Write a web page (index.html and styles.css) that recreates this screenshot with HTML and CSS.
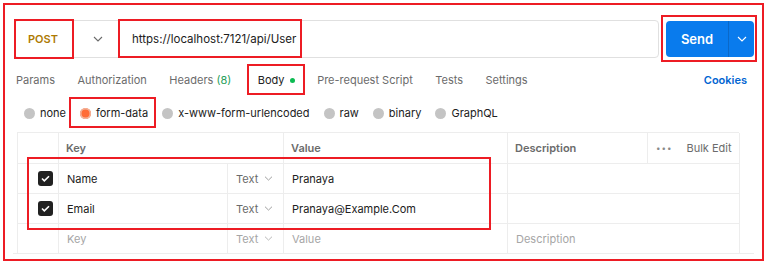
FILE: index.html
```html
<!DOCTYPE html>
<html>

<head>
    <meta charset="UTF-8">
    <meta name="viewport" content="width=device-width, initial-scale=1.0">
    <link rel="stylesheet" href="styles.css">
    <title>POST User</title>
</head>

<body>

    <div class="frame">

        <div class="url-row">
            <div class="url-bar">
                <div class="method">
                    <span class="method-name">POST</span>
                    <svg class="chev" width="10" height="6" viewBox="0 0 10 6"><path d="M1 1l4 4 4-4" fill="none" stroke="#6b6b6b" stroke-width="1.1"/></svg>
                </div>
                <div class="url">https://localhost:7121/api/User</div>
            </div>
            <div class="send">
                <span class="send-label">Send</span>
                <span class="send-more">
                    <svg width="10" height="6" viewBox="0 0 10 6"><path d="M1 1l4 4 4-4" fill="none" stroke="#fff" stroke-width="1.1"/></svg>
                </span>
            </div>
        </div>

        <div class="tabs">
            <a href="#params">Params</a>
            <a href="#auth">Authorization</a>
            <a href="#headers">Headers <span class="count">(8)</span></a>
            <a href="#body" class="active">Body <span class="dot"></span></a>
            <a href="#pre">Pre-request Script</a>
            <a href="#tests">Tests</a>
            <a href="#settings">Settings</a>
            <a href="#cookies" class="cookies">Cookies</a>
        </div>

        <div class="radios">
            <label><span class="radio"></span>none</label>
            <label><span class="radio checked"></span>form-data</label>
            <label><span class="radio"></span>x-www-form-urlencoded</label>
            <label><span class="radio"></span>raw</label>
            <label><span class="radio"></span>binary</label>
            <label><span class="radio"></span>GraphQL</label>
        </div>

        <div class="table-wrap">
            <div class="grid">
                <div class="cell head"></div>
                <div class="cell head span2">Key</div>
                <div class="cell head">Value</div>
                <div class="cell head">Description</div>
                <div class="cell head bulk"><span class="dots">&bull;&bull;&bull;</span>Bulk Edit</div>

                <div class="cell"><span class="check"><svg width="9" height="7" viewBox="0 0 9 7"><path d="M1 3.5l2.3 2.3L8 1.2" fill="none" stroke="#fff" stroke-width="1.6"/></svg></span></div>
                <div class="cell">Name</div>
                <div class="cell type">Text <svg width="9" height="5" viewBox="0 0 9 5"><path d="M1 .7l3.5 3.4L8 .7" fill="none" stroke="#a0a0a0" stroke-width="1"/></svg></div>
                <div class="cell">Pranaya</div>
                <div class="cell span2"></div>

                <div class="cell"><span class="check"><svg width="9" height="7" viewBox="0 0 9 7"><path d="M1 3.5l2.3 2.3L8 1.2" fill="none" stroke="#fff" stroke-width="1.6"/></svg></span></div>
                <div class="cell">Email</div>
                <div class="cell type">Text <svg width="9" height="5" viewBox="0 0 9 5"><path d="M1 .7l3.5 3.4L8 .7" fill="none" stroke="#a0a0a0" stroke-width="1"/></svg></div>
                <div class="cell">Pranaya@Example.Com</div>
                <div class="cell span2"></div>

                <div class="cell"></div>
                <div class="cell muted">Key</div>
                <div class="cell type muted">Text <svg width="9" height="5" viewBox="0 0 9 5"><path d="M1 .7l3.5 3.4L8 .7" fill="none" stroke="#b8b8b8" stroke-width="1"/></svg></div>
                <div class="cell muted">Value</div>
                <div class="cell span2 muted">Description</div>
            </div>
        </div>

        <!-- red annotation boxes drawn over the screenshot -->
        <div class="mark mark-method"></div>
        <div class="mark mark-url"></div>
        <div class="mark mark-send"></div>
        <div class="mark mark-body"></div>
        <div class="mark mark-form"></div>
        <div class="mark mark-rows"></div>
    </div>

</body>

</html>
```

FILE: styles.css
```css
body {
    margin: 0;
    padding: 0;
    background: #fff;
    font-family: Inter, "Noto Sans", sans-serif;
    font-size: 11px;
    color: #212121;
}

.frame {
    position: relative;
    margin: 3px 4px 0 3px;
    height: 254px;
    border: 2px solid #ed1c24;
}

/* url bar */

.url-row {
    display: flex;
    align-items: center;
    margin-top: 15px;
    padding-left: 9px;
}

.url-bar {
    display: flex;
    align-items: center;
    width: 643px;
    height: 36px;
    border: 1px solid #e0e0e0;
    border-radius: 4px;
}

.method {
    display: flex;
    align-items: center;
    justify-content: space-between;
    width: 104px;
    height: 100%;
    padding: 0 16px 0 13px;
    box-sizing: border-box;
}

.method-name {
    color: #ad7a03;
    font-weight: 600;
}

.url {
    padding-left: 13px;
    font-size: 11.5px;
}

.send {
    display: flex;
    margin-left: 7px;
    width: 88px;
    height: 36px;
    background-color: #097bed;
    border-radius: 4px;
    color: #fff;
}

.send-label {
    display: flex;
    align-items: center;
    justify-content: center;
    width: 62px;
    font-size: 13px;
    font-weight: 600;
}

.send-more {
    display: flex;
    align-items: center;
    justify-content: center;
    flex: 1;
    border-left: 1px solid #0a68c8;
}

/* tabs */

.tabs {
    display: flex;
    align-items: center;
    height: 28px;
    margin-top: 8px;
    padding: 0 15px 0 11px;
}

.tabs a {
    color: #6b6b6b;
    text-decoration: none;
    margin-right: 22.5px;
    white-space: nowrap;
}

.tabs a.active {
    margin-left: 4px;
    color: #212121;
}

.tabs .count {
    color: #28a05a;
}

.tabs .dot {
    display: inline-block;
    width: 5px;
    height: 5px;
    margin-left: 2px;
    border-radius: 50%;
    background-color: #0cbb52;
    vertical-align: 1px;
}

.tabs a.cookies {
    margin: 0 0 0 auto;
    color: #0265d2;
    font-weight: 600;
}

/* body type radios */

.radios {
    display: flex;
    align-items: center;
    height: 26px;
    margin-top: 6px;
    padding-left: 19px;
    color: #212121;
}

.radios label {
    display: flex;
    align-items: center;
    margin-right: 14px;
}

.radio {
    width: 11px;
    height: 11px;
    margin-right: 5px;
    border-radius: 50%;
    background-color: #c4c4c4;
}

.radio.checked {
    background-color: #ff6c37;
    box-shadow: inset 0 0 0 1.5px #f2b49c;
}

/* key value table */

.table-wrap {
    width: 737px;
    margin: 6px 0 0 8px;
    padding-left: 4px;
    border-bottom: 1px solid #ededed;
}

.grid {
    display: grid;
    grid-template-columns: 41px 169px 56px 224px 140px 92px;
    width: 722px;
    border-top: 1px solid #ededed;
    border-left: 1px solid #ededed;
    box-sizing: border-box;
}

.cell {
    display: flex;
    align-items: center;
    height: 29px;
    padding-left: 8px;
    border-right: 1px solid #ededed;
    border-bottom: 1px solid #ededed;
    white-space: nowrap;
}

.grid .cell:nth-last-child(-n+5) {
    border-bottom: none;
}

.cell.head {
    height: 30px;
    color: #6b6b6b;
    font-weight: 600;
}

.cell.head.span2,
.cell.head:nth-child(3),
.cell.head:nth-child(4) {
    padding-left: 7px;
}

.cell.span2 {
    grid-column: span 2;
}

.cell.bulk {
    font-weight: 400;
}

.dots {
    margin-right: 14px;
    font-size: 8px;
    letter-spacing: 1px;
    color: #8a8a8a;
}

.cell.type {
    color: #6b6b6b;
}

.cell.type svg {
    margin-left: 6px;
}

.cell.muted {
    color: #a6a6a6;
}

.check {
    display: flex;
    align-items: center;
    justify-content: center;
    width: 15px;
    height: 15px;
    margin-left: 12px;
    border-radius: 3px;
    background-color: #212121;
}

/* annotations */

.mark {
    position: absolute;
    border: 2px solid #ed1c24;
    box-sizing: border-box;
}

.mark-method { left: 9px;   top: 14px; width: 60px; height: 40px; }
.mark-url    { left: 113px; top: 14px; width: 184px; height: 39px; }
.mark-send   { left: 656px; top: 10px; width: 96px; height: 47px; }
.mark-body   { left: 242px; top: 59px; width: 58px; height: 31px; }
.mark-form   { left: 64px;  top: 92px; width: 87px; height: 31px; }
.mark-rows   { left: 22px;  top: 152px; width: 464px; height: 73px; }
```
